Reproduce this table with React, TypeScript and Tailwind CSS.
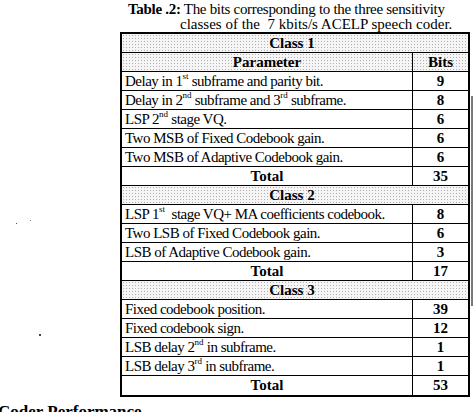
import React from "react";

const serif = { fontFamily: '"Liberation Serif", "Times New Roman", serif' };

type Row =
  | { kind: "class"; label: string }
  | { kind: "head" }
  | { kind: "data"; label: React.ReactNode; bits: string }
  | { kind: "total"; bits: string };

const Sup = ({ children }: { children: React.ReactNode }) => (
  <sup className="text-[9px] relative top-[-1px] align-super leading-none tracking-normal">{children}</sup>
);

const rows: Row[] = [
  { kind: "class", label: "Class 1" },
  { kind: "head" },
  { kind: "data", label: <>Delay in 1<Sup>st</Sup> subframe and parity bit.</>, bits: "9" },
  { kind: "data", label: <>Delay in 2<Sup>nd</Sup> subframe and 3<Sup>rd</Sup> subframe.</>, bits: "8" },
  { kind: "data", label: <>LSP 2<Sup>nd</Sup> stage VQ.</>, bits: "6" },
  { kind: "data", label: <>Two MSB of Fixed Codebook gain.</>, bits: "6" },
  { kind: "data", label: <>Two MSB of Adaptive Codebook gain.</>, bits: "6" },
  { kind: "total", bits: "35" },
  { kind: "class", label: "Class 2" },
  { kind: "data", label: <>LSP 1<Sup>st</Sup>&nbsp; stage VQ+ MA coefficients codebook.</>, bits: "8" },
  { kind: "data", label: <>Two LSB of Fixed Codebook gain.</>, bits: "6" },
  { kind: "data", label: <>LSB of Adaptive Codebook gain.</>, bits: "3" },
  { kind: "total", bits: "17" },
  { kind: "class", label: "Class 3" },
  { kind: "data", label: <>Fixed codebook position.</>, bits: "39" },
  { kind: "data", label: <>Fixed codebook sign.</>, bits: "12" },
  { kind: "data", label: <>LSB delay 2<Sup>nd</Sup> in subframe.</>, bits: "1" },
  { kind: "data", label: <>LSB delay 3<Sup>rd</Sup> in subframe.</>, bits: "1" },
  { kind: "total", bits: "53" },
];

const shade =
  "bg-[#f5f5f5] bg-[radial-gradient(circle,#b0b0b0_0.6px,transparent_0.9px)] bg-[length:3px_3px]";

export default function App() {
  return (
    <div className="w-[474px] h-[412px] bg-white overflow-hidden relative text-black" style={serif}>
      {/* caption */}
      <div className="h-[32px] flex flex-col text-[15px]">
        <div className="pl-[128px] leading-[18px] h-[17px] whitespace-nowrap tracking-[-0.3px]">
          <span className="font-bold">Table .2:</span> The bits corresponding to the three sensitivity
        </div>
        <div className="pl-[180px] leading-[15px] h-[15px] whitespace-nowrap">
          classes of the&nbsp; 7 kbits/s ACELP speech coder.
        </div>
      </div>

      {/* table */}
      <div className="ml-[120px] w-[350px] border-2 border-black flex flex-col text-[15px]">
        {rows.map((r, i) => {
          const last = i === rows.length - 1;
          const h = last ? "h-[19px]" : "h-[19px] border-b border-black";
          if (r.kind === "class") {
            return (
              <div key={i} className={`${h} ${shade} flex items-center justify-center font-bold leading-none pr-[6px]`}>
                {r.label}
              </div>
            );
          }
          if (r.kind === "head") {
            return (
              <div key={i} className={`${h} ${shade} flex font-bold leading-none`}>
                <div className="flex-1 border-r border-black flex items-center justify-center">Parameter</div>
                <div className="w-[55px] flex items-center justify-center">Bits</div>
              </div>
            );
          }
          if (r.kind === "total") {
            return (
              <div key={i} className={`${h} flex font-bold leading-none`}>
                <div className="flex-1 border-r border-black flex items-center justify-center">Total</div>
                <div className="w-[55px] flex items-center justify-center">{r.bits}</div>
              </div>
            );
          }
          return (
            <div key={i} className={`${h} flex leading-none`}>
              <div className="flex-1 border-r border-black flex items-center pl-[3px]">
                <span className="whitespace-nowrap tracking-[-0.5px]">{r.label}</span>
              </div>
              <div className="w-[55px] flex items-center justify-center font-bold">{r.bits}</div>
            </div>
          );
        })}
      </div>

      {/* bottom heading, cut off by the frame as in the source */}
      <div className="mt-[6px] text-[17px] font-bold leading-none whitespace-nowrap -ml-[2px]">
        Coder Performance
      </div>

      {/* scan artefacts */}
      <div className="absolute left-[471px] top-[96px] w-[2px] h-[210px] bg-[#7a7a7a]" />
      <div className="absolute left-[39px] top-[334px] w-[2px] h-[2px] bg-black rounded-full" />
      <div className="absolute left-[16px] top-[223px] w-[1px] h-[1px] bg-[#555]" />
      <div className="absolute left-[30px] top-[220px] w-[1px] h-[1px] bg-[#777]" />
    </div>
  );
}
